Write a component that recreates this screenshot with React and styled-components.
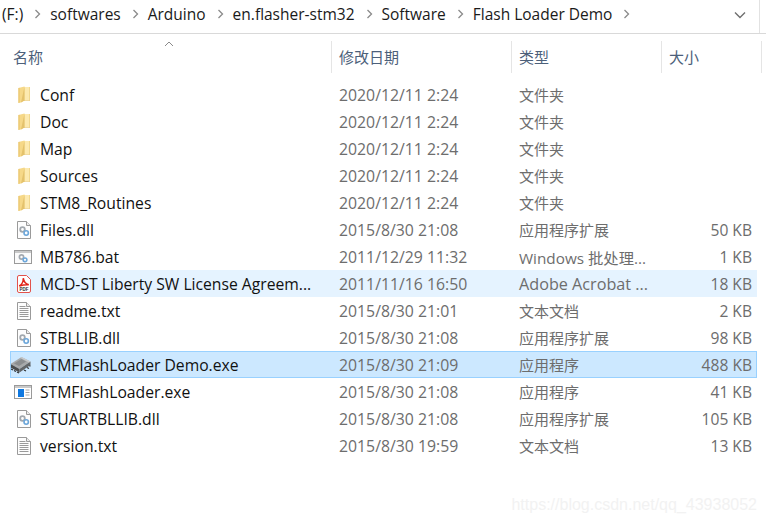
import React from 'react';
import styled, { createGlobalStyle } from 'styled-components';

const FONT = '"Open Sans", "Noto Sans CJK SC", sans-serif';

const GlobalStyle = createGlobalStyle`
  html, body {
    margin: 0;
    background: #fff;
  }
  body {
    font-family: ${FONT};
    width: 766px;
    height: 524px;
    overflow: hidden;
  }
`;

function Folder() {
  return (
    <svg width="16" height="18" viewBox="0 0 16 18" style={{ marginLeft: 1 }}>
      <path d="M6 1 H13 V14.5 H6 Z" fill="#fdeab0" />
      <path d="M13 1 V14.5 H12.3 V1 Z" fill="#ecd084" />
      <path d="M1.5 2 L7.5 0.5 V14.5 L4 16.5 L1.5 17 Z" fill="#f6d888" />
      <path d="M1.5 2 L2.4 1.8 V16.8 L1.5 17 Z" fill="#e6bf62" />
      <path d="M7.5 0.5 V14.5 H13 V15 H6.5 L4 16.5 Z" fill="#e4c26c" />
    </svg>
  );
}

function Page({ children }) {
  return (
    <svg width="16" height="18" viewBox="0 0 16 18">
      <path d="M1.5 0.5 H10.5 L14.5 4.5 V17.5 H1.5 Z" fill="#fdfdfd" stroke="#9a9a9a" />
      <path d="M10.5 0.5 V4.5 H14.5" fill="#ececec" stroke="#9a9a9a" />
      {children}
    </svg>
  );
}

function Gears() {
  return (
    <g fill="none">
      <circle cx="6.5" cy="8.5" r="2.3" stroke="#a2a8ae" strokeWidth="1.8" />
      <circle cx="10.2" cy="12" r="2.2" stroke="#6ba6da" strokeWidth="1.6" />
    </g>
  );
}

function Dll() {
  return (
    <Page>
      <Gears />
    </Page>
  );
}

function Bat() {
  return (
    <svg width="18" height="14" viewBox="0 0 18 14" style={{ marginLeft: -2 }}>
      <rect x="0.5" y="0.5" width="17" height="13" fill="#fbfbfb" stroke="#9a9a9a" />
      <rect x="1" y="1" width="16" height="2" fill="#c9c9c9" />
      <circle cx="7.5" cy="7" r="2.1" fill="none" stroke="#a2a8ae" strokeWidth="1.7" />
      <circle cx="11" cy="9.8" r="1.9" fill="none" stroke="#6ba6da" strokeWidth="1.5" />
    </svg>
  );
}

function Pdf() {
  return (
    <svg width="16" height="18" viewBox="0 0 16 18">
      <path d="M1.5 2 Q1.5 0.5 3 0.5 H10.5 L14.5 4.5 V16 Q14.5 17.5 13 17.5 H3 Q1.5 17.5 1.5 16 Z" fill="#fff" stroke="#e2534c" />
      <path d="M3.2 11 C5.5 9.8 7.3 6.5 7.3 3.2 C7.8 6.8 10 9.2 12.8 9.8 C10 9.6 6 10.2 3.2 11 Z" fill="none" stroke="#e0251b" strokeWidth="1.5" />
      <PdfLabel x="8" y="16" textAnchor="middle">PDF</PdfLabel>
    </svg>
  );
}

function Txt() {
  return (
    <Page>
      <path d="M3.5 4.5 H9.5 M3.5 6.5 H12.5 M3.5 8.5 H12.5 M3.5 10.5 H12.5 M3.5 12.5 H12.5 M3.5 14.5 H12.5" stroke="#9a9a9a" strokeWidth="1" />
    </Page>
  );
}

function Chip() {
  return (
    <svg width="21" height="18" viewBox="0 0 21 18" style={{ marginLeft: -6 }}>
      <path d="M3 14 L1 13 M6 15.5 L4 14.5 M9 17 L7 16 M14 14 L16 15 M17 11.5 L19 12.5 M19 9.5 L20.5 10.2" stroke="#2f3132" strokeWidth="1.3" />
      <path d="M0.5 8 L11.5 1 L20.5 5.5 L9.5 13 Z" fill="#a7a9aa" />
      <path d="M0.5 8 L9.5 13 L9.5 16.5 L0.5 11.5 Z" fill="#4b4d4e" />
      <path d="M9.5 13 L20.5 5.5 L20.5 9 L9.5 16.5 Z" fill="#626567" />
      <path d="M4 7.5 L11.5 3 L16 5.5 L9 10 Z" fill="#8a8d8f" />
      <path d="M11.5 1 L20.5 5.5 L19 6.5 L10.5 2 Z" fill="#c8cacb" />
    </svg>
  );
}

function Exe() {
  return (
    <svg width="18" height="14" viewBox="0 0 18 14" style={{ marginLeft: -2 }}>
      <rect x="0.5" y="0.5" width="17" height="13" fill="#fff" stroke="#9a9a9a" />
      <rect x="1" y="1" width="16" height="2" fill="#c9c9c9" />
      <rect x="4" y="4" width="6" height="8" fill="#0f78e0" />
      <path d="M11.5 5 H15.5 M11.5 7.5 H15.5 M11.5 10 H15.5" stroke="#a6a6a6" />
    </svg>
  );
}

const files = [
  { name: 'Conf', date: '2020/12/11 2:24', type: '文件夹', size: '', Icon: Folder },
  { name: 'Doc', date: '2020/12/11 2:24', type: '文件夹', size: '', Icon: Folder },
  { name: 'Map', date: '2020/12/11 2:24', type: '文件夹', size: '', Icon: Folder },
  { name: 'Sources', date: '2020/12/11 2:24', type: '文件夹', size: '', Icon: Folder },
  { name: 'STM8_Routines', date: '2020/12/11 2:24', type: '文件夹', size: '', Icon: Folder },
  { name: 'Files.dll', date: '2015/8/30 21:08', type: '应用程序扩展', size: '50 KB', Icon: Dll },
  { name: 'MB786.bat', date: '2011/12/29 11:32', type: 'Windows 批处理...', typeSize: 15.3, size: '1 KB', Icon: Bat },
  { name: 'MCD-ST Liberty SW License Agreem...', date: '2011/11/16 16:50', type: 'Adobe Acrobat ...', typeSize: 16.2, size: '18 KB', Icon: Pdf, state: 'hover' },
  { name: 'readme.txt', date: '2015/8/30 21:01', type: '文本文档', size: '2 KB', Icon: Txt },
  { name: 'STBLLIB.dll', date: '2015/8/30 21:08', type: '应用程序扩展', size: '98 KB', Icon: Dll },
  { name: 'STMFlashLoader Demo.exe', date: '2015/8/30 21:09', type: '应用程序', size: '488 KB', Icon: Chip, state: 'selected' },
  { name: 'STMFlashLoader.exe', date: '2015/8/30 21:08', type: '应用程序', size: '41 KB', Icon: Exe },
  { name: 'STUARTBLLIB.dll', date: '2015/8/30 21:08', type: '应用程序扩展', size: '105 KB', Icon: Dll },
  { name: 'version.txt', date: '2015/8/30 19:59', type: '文本文档', size: '13 KB', Icon: Txt },
];

const crumbs = ['softwares', 'Arduino', 'en.flasher-stm32', 'Software', 'Flash Loader Demo'];

function Chevron() {
  return (
    <CrumbArrow width="7" height="10" viewBox="0 0 7 10">
      <path d="M1.5 1 L5.5 5 L1.5 9" fill="none" stroke="#8a8a8a" strokeWidth="1.3" />
    </CrumbArrow>
  );
}

export default function App() {
  return (
    <>
      <GlobalStyle />
      <Window>
        <AddressBar>
          <Crumb>(F:)</Crumb>
          <Chevron />
          {crumbs.map((c) => (
            <React.Fragment key={c}>
              <Crumb>{c}</Crumb>
              <Chevron />
            </React.Fragment>
          ))}
          <Dropdown>
            <svg width="12" height="8" viewBox="0 0 12 8">
              <path d="M1 1.5 L6 6.5 L11 1.5" fill="none" stroke="#6f6f6f" strokeWidth="1.4" />
            </svg>
          </Dropdown>
        </AddressBar>
        <Header>
          <SortArrow width="10" height="6" viewBox="0 0 10 6">
            <path d="M1 5 L5 1 L9 5" fill="none" stroke="#8a8a8a" strokeWidth="1" />
          </SortArrow>
          <HeaderCell $width={322} $pad={3}>名称</HeaderCell>
          <HeaderCell $width={180}>修改日期</HeaderCell>
          <HeaderCell $width={150}>类型</HeaderCell>
          <HeaderCell $width={100}>大小</HeaderCell>
        </Header>
        <List>
          {files.map((f) => (
            <Row key={f.name} $state={f.state}>
              <NameCell>
                <IconSlot>
                  <f.Icon />
                </IconSlot>
                <Name>{f.name}</Name>
              </NameCell>
              <DateCell>{f.date}</DateCell>
              <TypeCell $size={f.typeSize}>{f.type}</TypeCell>
              <SizeCell>{f.size}</SizeCell>
            </Row>
          ))}
        </List>
        <Watermark>https://blog.csdn.net/qq_43938052</Watermark>
      </Window>
    </>
  );
}

const Window = styled.div`
  position: relative;
  width: 766px;
  height: 524px;
  background: #fff;
  font-size: 15px;
`;

const AddressBar = styled.div`
  display: flex;
  align-items: center;
  height: 33px;
  padding-left: 2px;
  border-bottom: 1px solid #d9d9d9;
  color: #1a1a1a;
  font-size: 15.5px;
`;

const Crumb = styled.span`
  white-space: nowrap;
  line-height: 28px;
  margin-bottom: 5px;
`;

const CrumbArrow = styled.svg`
  margin: 0 9px 5px 11px;
  flex: none;
`;

const Dropdown = styled.div`
  display: flex;
  align-items: center;
  justify-content: flex-end;
  flex: 1;
  height: 33px;
  padding: 0 13px 3px 0;
  box-sizing: border-box;
  margin-right: 6px;
  border-right: 1px solid #e2e2e2;
`;

const Header = styled.div`
  position: relative;
  display: flex;
  align-items: center;
  height: 32px;
  margin-top: 7px;
  padding-left: 10px;
  color: #4c607a;
  font-size: 15px;
`;

const SortArrow = styled.svg`
  position: absolute;
  left: 164px;
  top: 0;
`;

const HeaderCell = styled.div`
  box-sizing: border-box;
  width: ${(p) => p.$width}px;
  height: 32px;
  line-height: 32px;
  padding-left: ${(p) => p.$pad || 7}px;
  border-right: 1px solid #e5e5e5;
`;

const List = styled.div`
  display: flex;
  flex-direction: column;
  padding-top: 8px;
  margin: 0 9px 0 10px;
`;

const rowBackground = {
  hover: '#e5f3ff',
  selected: '#cce8ff',
};

const Row = styled.div`
  box-sizing: border-box;
  display: flex;
  align-items: center;
  height: 27px;
  background: ${(p) => rowBackground[p.$state] || 'transparent'};
  outline: ${(p) => (p.$state === 'selected' ? '1px solid #99d1ff' : 'none')};
  outline-offset: -1px;
`;

const NameCell = styled.div`
  display: flex;
  align-items: center;
  width: 321px;
  flex: none;
`;

const IconSlot = styled.div`
  display: flex;
  align-items: center;
  width: 30px;
  padding-left: 6px;
  box-sizing: border-box;
  flex: none;
`;

const Name = styled.span`
  color: #111;
  font-size: 15.7px;
  line-height: 21px;
  padding-top: 1px;
  white-space: nowrap;
`;

const PdfLabel = styled.text`
  font-family: "Liberation Sans", sans-serif;
  font-size: 4.5px;
  font-weight: 700;
  fill: #333;
`;

const DateCell = styled.div`
  width: 180px;
  padding: 1px 0 0 8px;
  box-sizing: border-box;
  color: #6d6d6d;
  font-size: 15.8px;
  line-height: 21px;
  flex: none;
`;

const TypeCell = styled.div`
  width: 150px;
  padding-left: 8px;
  box-sizing: border-box;
  color: #6d6d6d;
  font-size: ${(p) => p.$size || 15}px;
  white-space: nowrap;
  flex: none;
`;

const SizeCell = styled.div`
  width: 91px;
  padding-top: 1px;
  text-align: right;
  color: #6d6d6d;
  font-size: 15.6px;
  line-height: 21px;
  flex: none;
`;

const Watermark = styled.div`
  position: absolute;
  right: 9px;
  top: 496px;
  font-family: "Liberation Sans", sans-serif;
  font-size: 16px;
  color: #f2f2f2;
  white-space: nowrap;
`;
